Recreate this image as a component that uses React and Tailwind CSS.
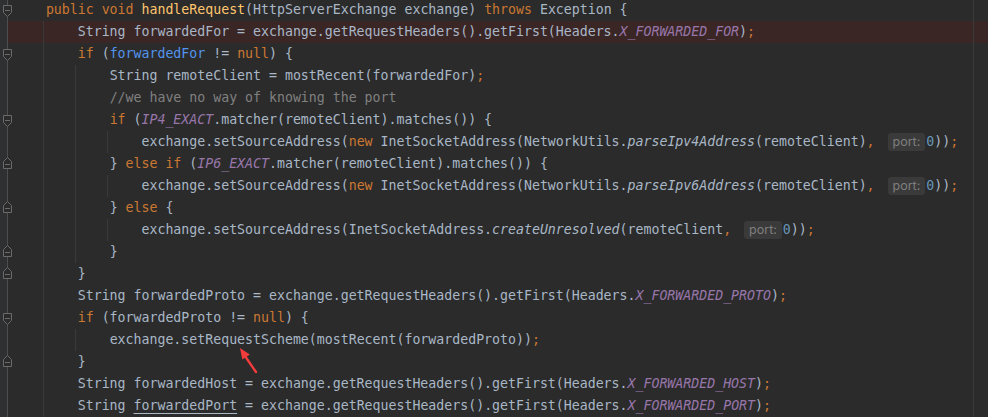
import React from "react";

const C = {
  d: "text-[#A9B7C6]",
  k: "text-[#CC7832]",
  m: "text-[#FFC66D]",
  c: "text-[#9876AA] italic",
  s: "text-[#A9B7C6] italic",
  n: "text-[#6897BB]",
  cm: "text-[#808080]",
  b: "text-[#5394EC]",
  u: "text-[#A9B7C6] underline underline-offset-[3px]",
};

const H = ["port:", "hint"];

const LINES = [
  { fold: "down", ind: 1, t: [["public void ", "k"], ["handleRequest", "m"], ["(HttpServerExchange exchange) ", "d"], ["throws ", "k"], ["Exception {", "d"]] },
  { hl: true, ind: 2, t: [["String forwardedFor = exchange.getRequestHeaders().getFirst(Headers.", "d"], ["X_FORWARDED_FOR", "c"], [")", "d"], [";", "k"]] },
  { fold: "down", ind: 2, t: [["if ", "k"], ["(", "d"], ["forwardedFor", "b"], [" != ", "d"], ["null", "k"], [") {", "d"]] },
  { ind: 3, t: [["String remoteClient = mostRecent(forwardedFor)", "d"], [";", "k"]] },
  { ind: 3, t: [["//we have no way of knowing the port", "cm"]] },
  { fold: "down", ind: 3, t: [["if ", "k"], ["(", "d"], ["IP4_EXACT", "c"], [".matcher(remoteClient).matches()) {", "d"]] },
  { ind: 4, t: [["exchange.setSourceAddress(", "d"], ["new ", "k"], ["InetSocketAddress(NetworkUtils.", "d"], ["parseIpv4Address", "s"], ["(remoteClient)", "d"], [",", "k"], [" ", "d"], H, ["0", "n"], ["))", "d"], [";", "k"]] },
  { fold: "up", ind: 3, t: [["} ", "d"], ["else if ", "k"], ["(", "d"], ["IP6_EXACT", "c"], [".matcher(remoteClient).matches()) {", "d"]] },
  { ind: 4, t: [["exchange.setSourceAddress(", "d"], ["new ", "k"], ["InetSocketAddress(NetworkUtils.", "d"], ["parseIpv6Address", "s"], ["(remoteClient)", "d"], [",", "k"], [" ", "d"], H, ["0", "n"], ["))", "d"], [";", "k"]] },
  { fold: "up", ind: 3, t: [["} ", "d"], ["else ", "k"], ["{", "d"]] },
  { ind: 4, t: [["exchange.setSourceAddress(InetSocketAddress.", "d"], ["createUnresolved", "s"], ["(remoteClient", "d"], [",", "k"], [" ", "d"], H, ["0", "n"], ["))", "d"], [";", "k"]] },
  { fold: "up", ind: 3, t: [["}", "d"]] },
  { fold: "up", ind: 2, t: [["}", "d"]] },
  { ind: 2, t: [["String forwardedProto = exchange.getRequestHeaders().getFirst(Headers.", "d"], ["X_FORWARDED_PROTO", "c"], [")", "d"], [";", "k"]] },
  { fold: "down", ind: 2, t: [["if ", "k"], ["(forwardedProto != ", "d"], ["null", "k"], [") {", "d"]] },
  { ind: 3, t: [["exchange.setRequestScheme(mostRecent(forwardedProto))", "d"], [";", "k"]] },
  { fold: "up", ind: 2, t: [["}", "d"]] },
  { ind: 2, t: [["String forwardedHost = exchange.getRequestHeaders().getFirst(Headers.", "d"], ["X_FORWARDED_HOST", "c"], [")", "d"], [";", "k"]] },
  { ind: 2, t: [["String ", "d"], ["forwardedPort", "u"], [" = exchange.getRequestHeaders().getFirst(Headers.", "d"], ["X_FORWARDED_PORT", "c"], [")", "d"], [";", "k"]] },
];

function Gutter({ fold, hl }) {
  return (
    <svg width="14" height="22" viewBox="0 0 14 22" className="shrink-0 block">
      <rect x="0" y="0" width="7" height="22" fill="#2f3032" />
      <line x1="7.5" y1="0" x2="7.5" y2="22" stroke="#4e4e4e" strokeWidth="1" />
      {fold === "down" && (
        <g>
          <path d="M3.5 6.5 H11.5 V13.5 L7.5 17.5 L3.5 13.5 Z" fill={hl ? "#3b2626" : "#2b2b2b"} stroke="#6a6a6a" strokeWidth="1" />
          <line x1="5" y1="11.5" x2="10" y2="11.5" stroke="#6a6a6a" strokeWidth="1" />
        </g>
      )}
      {fold === "up" && (
        <g>
          <path d="M7.5 4.5 L11.5 8.5 V15.5 H3.5 V8.5 Z" fill="#2b2b2b" stroke="#6a6a6a" strokeWidth="1" />
          <line x1="5" y1="11.5" x2="10" y2="11.5" stroke="#6a6a6a" strokeWidth="1" />
        </g>
      )}
    </svg>
  );
}

function Hint() {
  return (
    <span className="inline-flex items-center h-[18px] ml-[5px] mr-[1px] px-[5px] rounded-[3px] bg-[#3a3a3a] text-[#7f7f7f] font-['Inter',sans-serif] not-italic text-[12.5px] leading-[18px] align-middle">
      port:
    </span>
  );
}

function Indent({ levels }) {
  const chunks = [];
  for (let k = 0; k < levels; k++) {
    chunks.push(
      k === 0 ? (
        <span key={k} className="inline-block h-[22px] align-top">{"    "}</span>
      ) : (
        <span key={k} className="inline-block h-[22px] align-top -ml-[3px] pl-[2px] border-l border-[#3a3a3a]">{"    "}</span>
      )
    );
  }
  return chunks;
}

export default function App() {
  return (
    <div className="relative w-[988px] h-[417px] overflow-hidden bg-[#2B2B2B]">
      <div className="-mt-px flex flex-col font-['DejaVu_Sans_Mono',monospace] text-[13.24px] leading-[22px]">
        {LINES.map((ln, i) => (
          <div key={i} className={ln.hl ? "flex h-[22px] bg-[#3b2626]" : "flex h-[22px]"}>
            <Gutter fold={ln.fold} hl={ln.hl} />
            <div className="w-[959px] shrink-0 overflow-hidden whitespace-pre text-[#A9B7C6]">
              <Indent levels={ln.ind} />
              {ln.t.map((tok, j) =>
                tok === H ? <Hint key={j} /> : (
                  <span key={j} className={C[tok[1]]}>{tok[0]}</span>
                )
              )}
            </div>
            <div className="w-px shrink-0 bg-[#3a3a3a]" />
            <div className="flex-1" />
          </div>
        ))}
      </div>

      {/* red annotation arrow drawn over the code */}
      <svg className="absolute left-[236px] top-[345px]" width="26" height="30" viewBox="0 0 26 30">
        <line x1="9" y1="11" x2="20" y2="27" stroke="#f23b3b" strokeWidth="2.4" strokeLinecap="round" />
        <path d="M4 3 L13.8 9.6 L6.3 14.6 Z" fill="#f23b3b" />
      </svg>
    </div>
  );
}
